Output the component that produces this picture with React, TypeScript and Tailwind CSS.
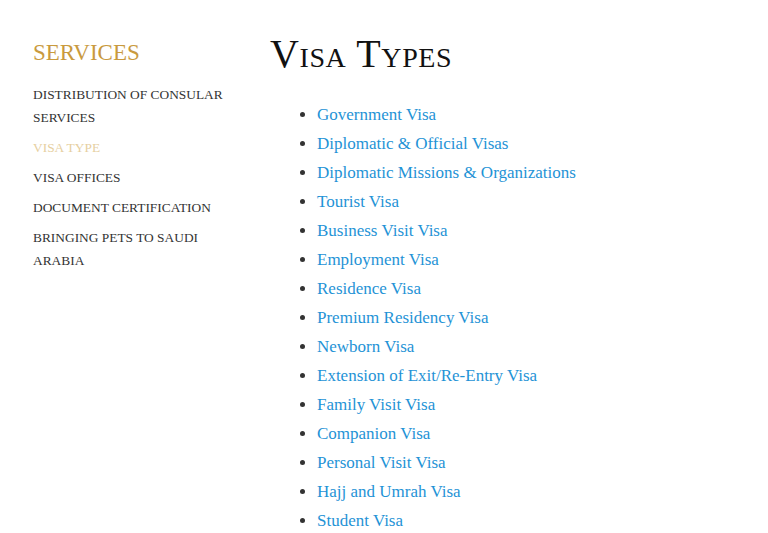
import React from 'react'

const services = [
  { label: 'Distribution of Consular Services' },
  { label: 'Visa Type', active: true },
  { label: 'Visa Offices' },
  { label: 'Document Certification' },
  { label: 'Bringing Pets to Saudi Arabia' },
]

const visas = [
  'Government Visa',
  'Diplomatic & Official Visas',
  'Diplomatic Missions & Organizations',
  'Tourist Visa',
  'Business Visit Visa',
  'Employment Visa',
  'Residence Visa',
  'Premium Residency Visa',
  'Newborn Visa',
  'Extension of Exit/Re-Entry Visa',
  'Family Visit Visa',
  'Companion Visa',
  'Personal Visit Visa',
  'Hajj and Umrah Visa',
  'Student Visa',
]

export default function App() {
  return (
    <div className="min-h-screen bg-white font-['Liberation_Serif','Times_New_Roman',serif]">
      <div className="flex pl-[33px] pt-[34px]">
        {/* Sidebar */}
        <aside className="w-[237px] shrink-0 pr-[30px]">
          <h2 className="mt-[4px] text-[23px] leading-[30px] text-[#c99a3e]">SERVICES</h2>
          <ul className="mt-[15px] flex flex-col gap-[7px]">
            {services.map(s => (
              <li key={s.label} className={`text-[13.4px] leading-[23px] uppercase ${s.active ? 'text-[#e6cfa1]' : 'text-[#333333]'}`}>
                <a href="#">{s.label}</a>
              </li>
            ))}
          </ul>
        </aside>

        {/* Main */}
        <main className="flex-1">
          <h1 className="text-[40px] leading-[40px] text-[#111111] [font-variant:small-caps] tracking-[0.6px]">Visa Types</h1>
          <ul className="mt-[26px] pl-[47px] list-disc marker:text-[#333333]">
            {visas.map(v => (
              <li key={v} className="text-[17px] leading-[29px] text-[#1f93d6]">
                <a href="#">{v}</a>
              </li>
            ))}
          </ul>
        </main>
      </div>
    </div>
  )
}
